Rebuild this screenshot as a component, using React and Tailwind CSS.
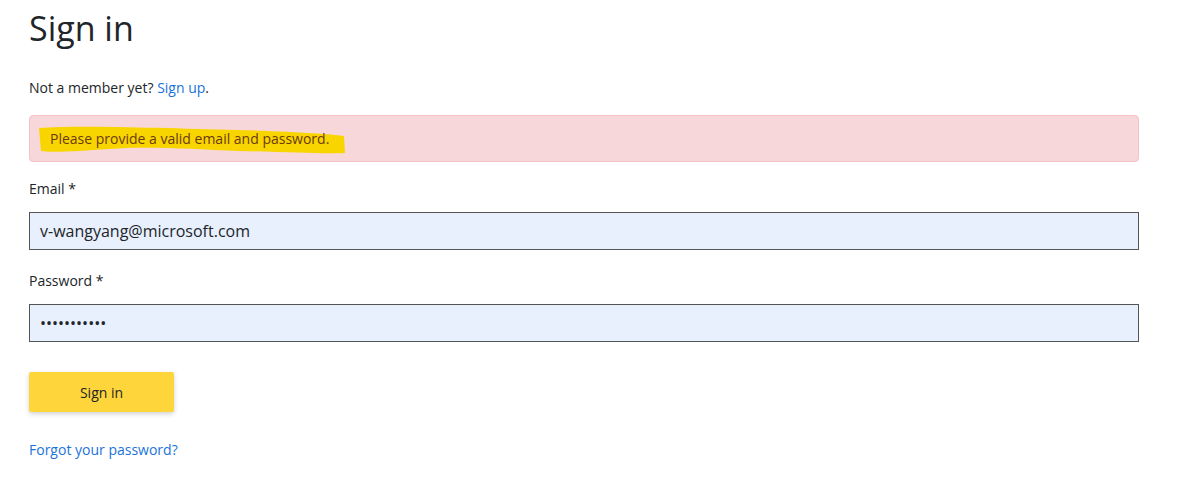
import React from "react";

const Highlight = () => (
  <svg
    className="absolute left-[9px] top-[10px] pointer-events-none"
    width="310"
    height="30"
    viewBox="0 0 310 30"
  >
    <path
      d="M0 2 C40 -1 120 2 200 4 C260 6 290 8 305 10 L306 27 C280 28 250 26 200 25 C150 23 110 20 70 23 C40 25 15 27 2 25 Z"
      fill="#f9d500"
    />
  </svg>
);

export default function App() {
  return (
    <div
      className="bg-white text-[#212529] px-[29px] h-[485px] w-[1196px]"
      style={{ fontFamily: '"Open Sans", "Noto Sans", sans-serif' }}
    >
      <div className="w-[1110px]">
        <h1 className="text-[34px] leading-[56px] font-normal">Sign in</h1>

        <p className="mt-[22px] text-[14px] leading-[20px]">
          Not a member yet?{" "}
          <a className="text-[#1a73d9]" href="#">
            Sign up
          </a>
          .
        </p>

        <div className="relative mt-[17px] h-[47px] rounded-[4px] border border-[#f5c2c7] bg-[#f8d7da] px-[20px] flex items-center">
          <Highlight />
          <span className="relative text-[14px] text-[#6b3a10]">
            Please provide a valid email and password.
          </span>
        </div>

        <label className="block mt-[17px] text-[14px] leading-[20px]">
          Email *
        </label>
        <div className="mt-[13px] h-[38px] border border-[#555] bg-[#e8f0fe] px-[10px] flex items-center text-[16px]">
          v-wangyang@microsoft.com
        </div>

        <label className="block mt-[21px] text-[14px] leading-[20px]">
          Password *
        </label>
        <div className="mt-[13px] h-[38px] border border-[#555] bg-[#e8f0fe] px-[10px] flex items-center text-[16px]">
          •••••••••••
        </div>

        <button className="mt-[30px] w-[145px] h-[40px] rounded-[2px] bg-[#fed53a] text-[14px] text-[#212529] shadow-[0_2px_5px_rgba(0,0,0,0.18)]">
          Sign in
        </button>

        <div className="mt-[25px]">
          <a className="text-[14px] text-[#1a73d9]" href="#">
            Forgot your password?
          </a>
        </div>
      </div>
    </div>
  );
}
